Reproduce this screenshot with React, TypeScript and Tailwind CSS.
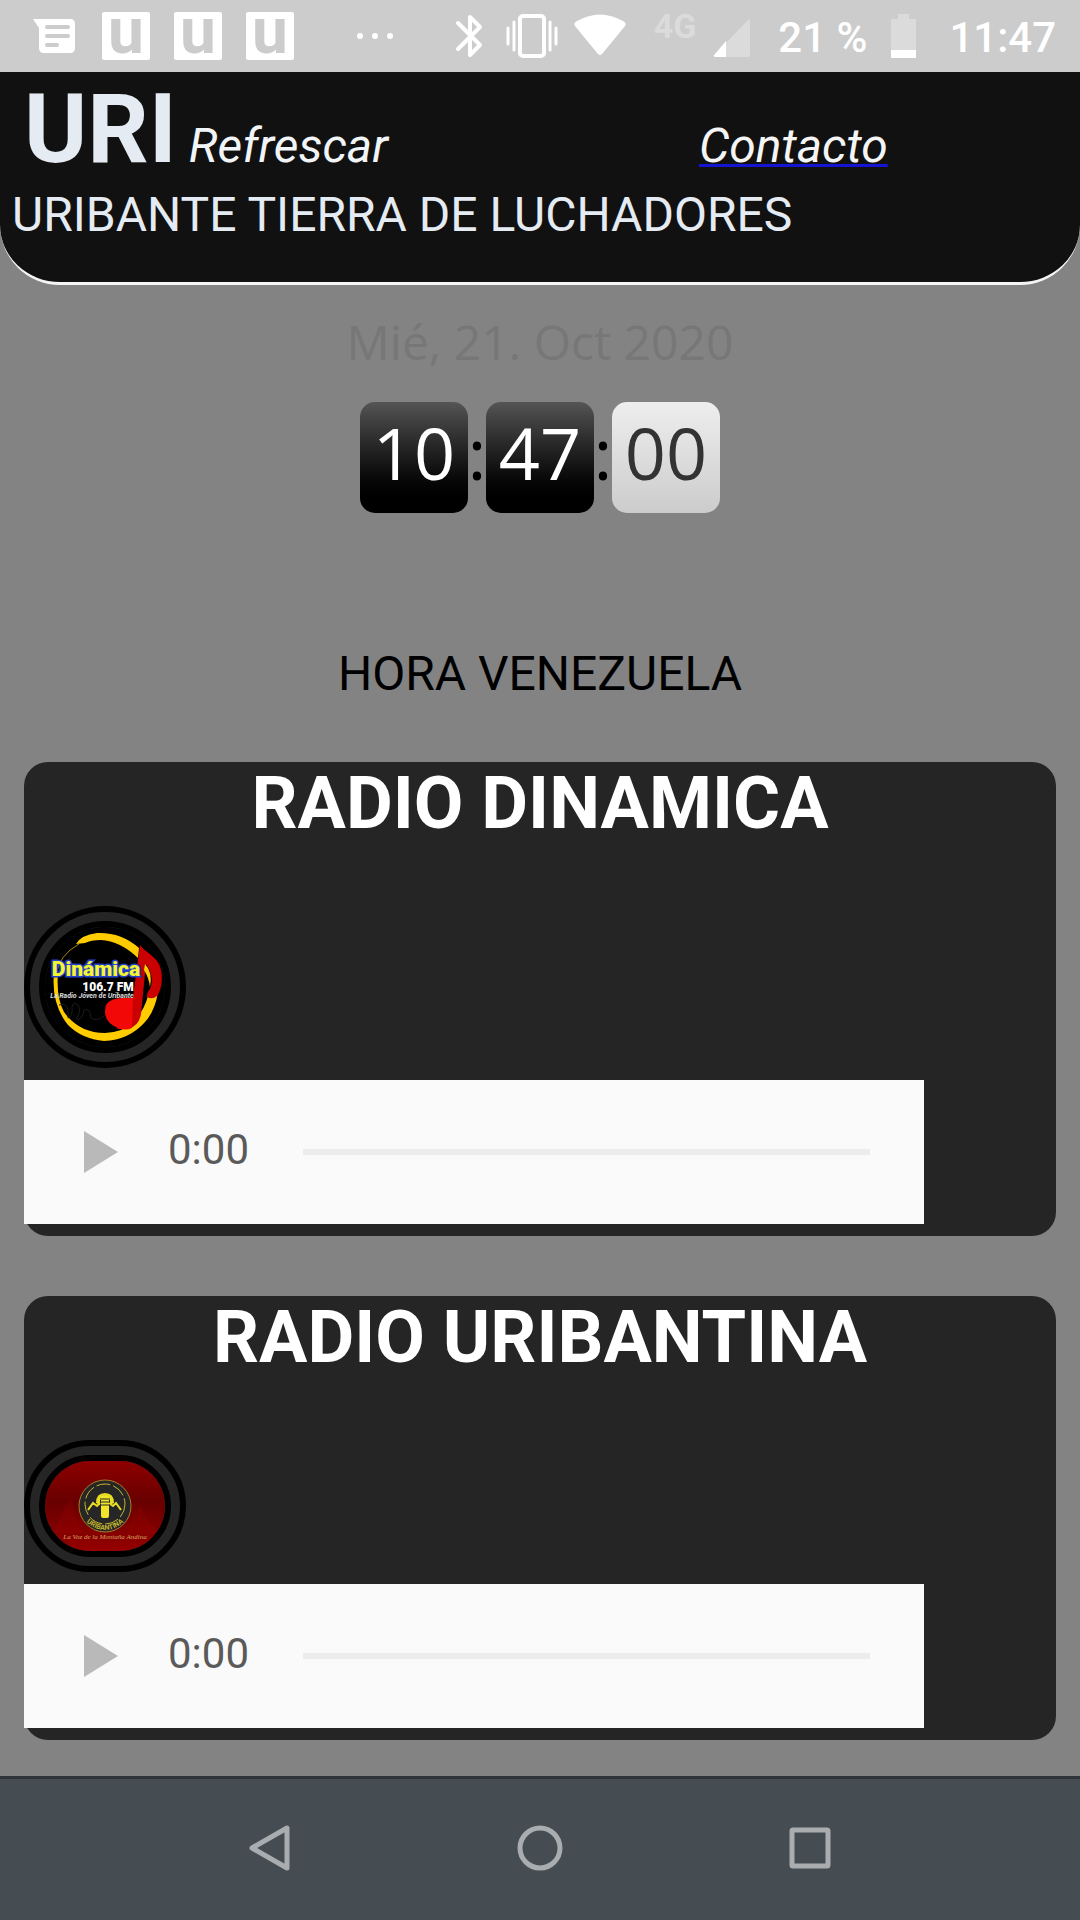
import type { ReactNode } from 'react';

interface Station {
  id: string;
  name: string;
  logo: ReactNode;
}

function AppBadge() {
  return (
    <svg className="h-12 w-12" viewBox="0 0 48 48">
      <rect width="48" height="48" rx="2" fill="#fff" />
      <text x="24" y="41" textAnchor="middle" fontSize="64" fontWeight="700" fill="#ccc">u</text>
    </svg>
  );
}

function StatusBar() {
  return (
    <div className="flex h-18 items-center justify-between bg-[#ccc] pr-6 pl-8 text-[42px] leading-[48px] font-medium text-white">
      <div className="flex items-center gap-6">
        <svg className="mr-0.5 h-9 w-11" viewBox="0 0 44 36">
          <path d="M1 1H38Q43 1 43 6V30Q43 35 38 35H12Q7 35 7 30V10Z" fill="#fff" />
          <path d="M15 9H36M15 18H36M15 27H25" stroke="#ccc" strokeWidth="4" strokeLinecap="round" />
        </svg>
        <AppBadge />
        <AppBadge />
        <AppBadge />
        <svg className="ml-9 h-3 w-10" viewBox="0 0 40 12" fill="#fff">
          <circle cx="6" cy="6" r="3" />
          <circle cx="21" cy="6" r="3" />
          <circle cx="36" cy="6" r="3" />
        </svg>
      </div>

      <div className="flex items-center">
        <svg className="mr-5 h-11 w-8" viewBox="0 0 32 44" fill="none" stroke="#fff" strokeWidth="4" strokeLinecap="round" strokeLinejoin="round">
          <path d="M4 9L26 31L16 41V3L26 13L4 35" />
        </svg>
        <svg className="mr-4 h-11 w-13" viewBox="0 0 52 44" fill="none" stroke="#fff">
          <rect x="14" y="2" width="24" height="40" rx="3" strokeWidth="4" />
          <path d="M8 8V36M44 8V36M2 14V30M50 14V30" strokeWidth="3" strokeLinecap="round" />
        </svg>
        <svg className="mr-7 h-11 w-13" viewBox="0 0 52 44" fill="#fff">
          <path d="M1 12Q-1 9 3 7Q26 -6 49 7Q53 9 51 12L28 40Q26 42 24 40Z" />
        </svg>
        <span className="mr-4 mb-5 text-[34px] leading-[32px] font-bold text-[#dbdbdb]">4G</span>
        <svg className="mt-1 mr-[26px] h-10 w-10" viewBox="0 0 40 40">
          <path d="M38 3V37Q38 39 36 39H4Q0 39 3 36L36 2Q38 0 38 3Z" fill="#dbdbdb" />
          <path d="M14 23V39H4Q0 39 3 36Z" fill="#fff" />
        </svg>
        <span className="mr-6 pt-1">21 %</span>
        <svg className="mr-8 h-11 w-[26px]" viewBox="0 0 26 44">
          <path d="M7 0H18V5H25V36H0V5H7Z" fill="#dbdbdb" />
          <path d="M0 36H25V44H0Z" fill="#fff" />
        </svg>
        <span className="pt-1">11:47</span>
      </div>
    </div>
  );
}

function Header() {
  return (
    <header className="rounded-b-[60px] border-b-[3px] border-[#f5f5f5] bg-[#111] px-3 pb-[38px] text-[#e4ebf2]">
      <div className="flex items-baseline pl-3">
        <h1 className="text-[96px] leading-[114px] font-bold">URI</h1>
        <button type="button" className="ml-3 text-5xl text-[#f2f5f8] italic">Refrescar</button>
        <a href="#contacto" className="ml-[311px] text-5xl text-[#f5f5f5] italic underline decoration-[#1414d2] decoration-3">
          Contacto
        </a>
      </div>
      <p className="text-5xl leading-[58px]">URIBANTE TIERRA DE LUCHADORES</p>
    </header>
  );
}

function Clock() {
  return (
    <section className="text-center">
      <p className="pt-6 font-['Open_Sans',sans-serif] text-5xl leading-[66px] text-[#777]">Mié, 21. Oct 2020</p>
      <div className="mt-[27px] flex justify-center font-['Open_Sans',sans-serif] text-[72px] leading-[101px] text-black">
        <span className="w-27 rounded-[15px] bg-linear-to-b from-[#555] to-black pb-2.5 text-white">10</span>
        <span className="flex w-[18px] justify-center">:</span>
        <span className="w-27 rounded-[15px] bg-linear-to-b from-[#555] to-black pb-2.5 text-white">47</span>
        <span className="flex w-[18px] justify-center">:</span>
        <span className="w-27 rounded-[15px] bg-linear-to-b from-[#eee] to-[#ccc] pb-2.5 text-[#333]">00</span>
      </div>
      <p className="mt-[129px] text-5xl leading-[64px] text-black">HORA VENEZUELA</p>
    </section>
  );
}

function DinamicaLogo() {
  return (
    <svg className="block h-full w-full" viewBox="0 0 120 120">
      <rect width="120" height="120" fill="#000" />
      <path d="M34 17Q14 28 11 48Q9 66 17 86" fill="none" stroke="#a98a00" strokeWidth="1" />
      <path d="M31 17Q36 8 52 6Q76 5 94 21L93 31Q75 14 56 13Q46 13 40 16Z" fill="#fc0" />
      <path d="M9 46H13Q11 70 19 85Q34 106 60 106Q79 105 88 95Q99 84 103 69L113 65Q110 84 100 95Q84 113 59 114Q37 112 23 98Q6 77 9 46Z" fill="#fc0" />
      <path d="M95 18C100 25 109 28 114 37C119 48 117 62 112 69Q107 73 102 70Q101 66 105 62Q110 50 101 37L96 87Q94 99 83 102H72L88 70Z" fill="#cb0000" />
      <path d="M61 78Q66 69 88 71L87 101Q78 105 69 99Q57 92 61 78Z" fill="#f30808" />
      <path d="M100 37Q108 45 105 60Q104 51 99 43Z" fill="#fc0" />
      <path d="M14 78Q25 74 23 91Q28 90 27 80Q29 72 34 80Q36 85 31 92Q37 94 39 83Q45 80 46 91Q51 95 59 89" fill="none" stroke="#1d1d1d" strokeWidth="1" />
      <text x="51" y="49" textAnchor="middle" fontSize="21" fontWeight="900" fill="#f5f530" stroke="#2440c8" strokeWidth="3" paintOrder="stroke">Dinámica</text>
      <text x="63" y="64" textAnchor="middle" fontSize="12" fontWeight="900" fill="#fff">106.7 FM</text>
      <text x="47" y="71" textAnchor="middle" fontSize="7" fontStyle="italic" fontWeight="700" fill="#ddd">La Radio Jóven de Uribante</text>
    </svg>
  );
}

function UribantinaLogo() {
  return (
    <svg className="block h-full w-full" viewBox="0 0 120 90">
      <defs>
        <linearGradient id="redBackdrop" x1="0" y1="0" x2="0" y2="1">
          <stop offset="0" stopColor="#8e0000" />
          <stop offset="0.45" stopColor="#680000" />
          <stop offset="1" stopColor="#960000" />
        </linearGradient>
      </defs>
      <rect width="120" height="90" fill="url(#redBackdrop)" />
      <path d="M8 72L25 38L37 72ZM80 70L95 45L113 74Z" fill="#a00000" opacity="0.25" />
      <circle cx="60" cy="45" r="26" fill="#262626" stroke="#a3822b" strokeWidth="1" />
      <circle cx="60" cy="43" r="20" fill="none" stroke="#c2b52f" strokeWidth="1" strokeDasharray="14 3" />
      <path d="M43 49L48 42L52 45L55 42M64 42L68 45L71 42L76 49" fill="none" stroke="#e8dc22" strokeWidth="2" />
      <path d="M51 42Q51 32 60 32Q69 32 69 42L65 44V39H55V44Z" fill="#e8dc22" />
      <path d="M56 35H64V55Q64 57 62 57H58Q56 57 56 55Z" fill="#f0e52a" />
      <path d="M55 38H65M55 41H65M55 44H65" stroke="#262626" strokeWidth="1" />
      <path id="sealArc" d="M38 58Q60 80 82 58" fill="none" />
      <text fontSize="7" fontWeight="700" fill="#c2b52f">
        <textPath href="#sealArc" startOffset="50%" textAnchor="middle">URIBANTINA</textPath>
      </text>
      <text x="60" y="78" textAnchor="middle" fontSize="7" fontStyle="italic" fontFamily="Liberation Serif, serif" fill="#d6a060">La Voz de la Montaña Andina</text>
    </svg>
  );
}

const stations: Station[] = [
  {
    id: 'dinamica',
    name: 'RADIO DINAMICA',
    logo: (
      <div className="h-[132px] w-[132px] overflow-hidden rounded-full border-[6px] border-black">
        <DinamicaLogo />
      </div>
    ),
  },
  {
    id: 'uribantina',
    name: 'RADIO URIBANTINA',
    logo: (
      <div className="h-[102px] w-[132px] overflow-hidden rounded-[51px] border-[6px] border-black">
        <UribantinaLogo />
      </div>
    ),
  },
];

function Player({ station }: { station: Station }) {
  return (
    <div className="flex h-36 w-[900px] max-w-full items-center bg-[#fafafa] pr-[54px] pl-15">
      <button type="button" aria-label={`Reproducir ${station.name}`}>
        <svg className="h-[42px] w-[34px]" viewBox="0 0 34 42" fill="#b9b9b9">
          <path d="M0 0L34 21L0 42Z" />
        </svg>
      </button>
      <span className="ml-[50px] pb-1 text-[42px] leading-[48px] text-[#5a5a5a]">0:00</span>
      <input
        type="range"
        min={0}
        max={100}
        defaultValue={0}
        aria-label={`Posición ${station.name}`}
        className="ml-[54px] h-1.5 min-w-0 flex-1 appearance-none bg-[#ececec] [&::-webkit-slider-thumb]:appearance-none"
      />
    </div>
  );
}

function StationCard({ station }: { station: Station }) {
  return (
    <article className="rounded-3xl bg-[#252525] pb-3">
      <h2 className="h-36 text-center text-[72px] leading-[83px] font-bold text-white">{station.name}</h2>
      {/* double ring around the station logo */}
      <div className="mb-3 w-fit rounded-[81px] border-[6px] border-black p-[9px]">{station.logo}</div>
      <Player station={station} />
    </article>
  );
}

function NavBar() {
  return (
    <nav className="flex h-36 items-center justify-center gap-[222px] border-t-[3px] border-[#2f3438] bg-[#454d52] pb-1">
      <button type="button" aria-label="Atrás">
        <svg className="h-12 w-12" viewBox="0 0 48 48" fill="none" stroke="#a9adb0" strokeWidth="5" strokeLinejoin="round">
          <path d="M41 4V44L6 24Z" />
        </svg>
      </button>
      <button type="button" aria-label="Inicio">
        <svg className="h-12 w-12" viewBox="0 0 48 48" fill="none" stroke="#a9adb0" strokeWidth="5">
          <circle cx="24" cy="24" r="20" />
        </svg>
      </button>
      <button type="button" aria-label="Recientes">
        <svg className="h-12 w-12" viewBox="0 0 48 48" fill="none" stroke="#a9adb0" strokeWidth="5" strokeLinejoin="round">
          <rect x="6" y="6" width="36" height="36" rx="1" />
        </svg>
      </button>
    </nav>
  );
}

export default function App() {
  return (
    <div className="flex min-h-screen flex-col bg-[#838383] font-[Roboto,sans-serif]">
      <StatusBar />
      <Header />
      <main className="flex-1 pb-9">
        <Clock />
        <div className="mx-6 mt-14 flex flex-col gap-15">
          {stations.map((station) => (
            <StationCard key={station.id} station={station} />
          ))}
        </div>
      </main>
      <NavBar />
    </div>
  );
}
